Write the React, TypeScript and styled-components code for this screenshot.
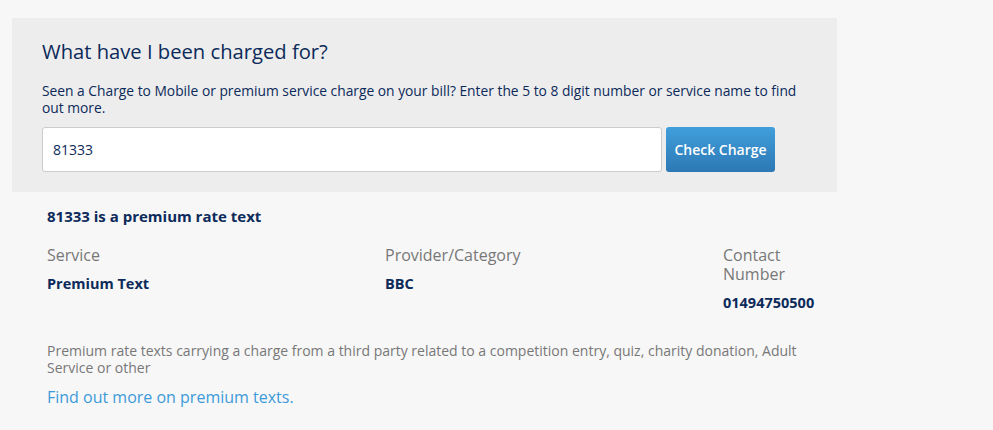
import React from "react";
import styled, { createGlobalStyle } from "styled-components";

const Global = createGlobalStyle`
  html, body { margin: 0; padding: 0; background: #f7f7f7; }
  body { font-family: "Open Sans", "Noto Sans", Arial, sans-serif; color: #0c2a5a; }
  * { box-sizing: border-box; }
`;

const Page = styled.div`
  padding: 18px 12px 0;
  width: 849px;
`;

const Panel = styled.section`
  background: #ededed;
  padding: 20px 30px 20px;
`;

const Heading = styled.h1`
  margin: 0 0 18px;
  font-size: 20.2px;
  font-weight: 400;
  line-height: 26px;
  color: #0c2a5a;
`;

const Intro = styled.p`
  margin: 0 0 11px;
  font-size: 13.8px;
  line-height: 17px;
  color: #0c2a5a;
`;

const SearchRow = styled.form`
  display: flex;
  gap: 4px;
`;

const Input = styled.input`
  width: 620px;
  height: 45px;
  border: 1px solid #cccccc;
  border-radius: 3px;
  background: #fff;
  padding: 0 10px;
  font-family: inherit;
  font-size: 14px;
  color: #0c2a5a;
  outline: none;
`;

const Button = styled.button`
  width: 109px;
  height: 45px;
  border: none;
  border-radius: 3px;
  background: linear-gradient(#419fdb, #2c78b4);
  color: #fff;
  font-family: inherit;
  font-size: 14px;
  font-weight: 600;
  cursor: pointer;
`;

const Results = styled.section`
  padding: 14px 35px 0;
`;

const ResultTitle = styled.h2`
  margin: 0 0 20px;
  font-size: 15px;
  font-weight: 700;
  line-height: 20px;
  color: #0c2a5a;
`;

const Grid = styled.div`
  display: grid;
  grid-template-columns: 338px 338px 110px;
`;

const Cell = styled.div`
  display: flex;
  flex-direction: column;
`;

const Label = styled.div`
  font-size: 16px;
  line-height: 19px;
  color: #777777;
  margin-bottom: 9px;
`;

const Value = styled.div`
  font-size: 14.5px;
  font-weight: 700;
  line-height: 20px;
  color: #0c2a5a;
`;

const Note = styled.p`
  margin: 29px 0 10px;
  font-size: 14px;
  line-height: 17px;
  color: #777777;
  max-width: 780px;
`;

const MoreLink = styled.a`
  font-size: 16px;
  line-height: 20px;
  color: #3d9ad9;
  text-decoration: none;
`;

const fields = [
  { label: "Service", value: "Premium Text" },
  { label: "Provider/Category", value: "BBC" },
  { label: "Contact Number", value: "01494750500" },
];

export default function App() {
  return (
    <>
      <Global />
      <Page>
        <Panel>
          <Heading>What have I been charged for?</Heading>
          <Intro>
            Seen a Charge to Mobile or premium service charge on your bill? Enter the 5 to 8 digit number or service
            name to find out more.
          </Intro>
          <SearchRow onSubmit={(e) => e.preventDefault()}>
            <Input defaultValue="81333" />
            <Button type="submit">Check Charge</Button>
          </SearchRow>
        </Panel>
        <Results>
          <ResultTitle>81333 is a premium rate text</ResultTitle>
          <Grid>
            {fields.map((f) => (
              <Cell key={f.label}>
                <Label>{f.label}</Label>
                <Value>{f.value}</Value>
              </Cell>
            ))}
          </Grid>
          <Note>
            Premium rate texts carrying a charge from a third party related to a competition entry, quiz, charity
            donation, Adult Service or other
          </Note>
          <MoreLink href="#">Find out more on premium texts.</MoreLink>
        </Results>
      </Page>
    </>
  );
}
